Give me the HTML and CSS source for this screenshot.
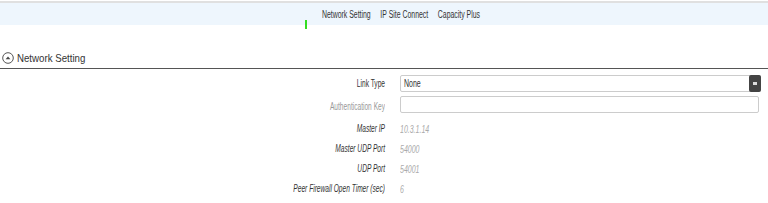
FILE: index.html
```html
<!DOCTYPE html>
<html lang="en">

<head>
    <meta charset="UTF-8">
    <title>Network Setting</title>
    <link rel="stylesheet" href="styles.css">
</head>

<body>
    <div class="topbar">
        <span class="loader"></span>
        <nav class="tabs">
            <a href="#">Network Setting</a>
            <a href="#">IP Site Connect</a>
            <a href="#">Capacity Plus</a>
        </nav>
    </div>

    <div class="section-head">
        <svg class="toggle" width="12" height="12" viewBox="0 0 12 12">
            <circle cx="6" cy="6" r="5.3" fill="none" stroke="#555" stroke-width="1"/>
            <path d="M3.6 7.2 L6 4.6 L8.4 7.2 Z" fill="#444"/>
        </svg>
        <span class="title">Network Setting</span>
    </div>

    <div class="form">
        <label>Link Type</label>
        <div class="select">
            <span class="text">None</span>
            <span class="arrow"></span>
        </div>

        <label class="muted">Authentication Key</label>
        <div class="textbox"></div>

        <label class="ro">Master IP</label>
        <span class="value">10.3.1.14</span>

        <label class="ro">Master UDP Port</label>
        <span class="value">54000</span>

        <label class="ro">UDP Port</label>
        <span class="value">54001</span>

        <label class="ro">Peer Firewall Open Timer (sec)</label>
        <span class="value">6</span>
    </div>
</body>

</html>
```

FILE: styles.css
```css
body {
    margin: 0;
    font-family: "Liberation Sans", Arial, sans-serif;
    font-size: 10px;
    color: #333;
    background: #fff;
}

.topbar {
    position: relative;
    margin-top: 1px;
    border-top: 2px solid #e0e0e0;
    background-color: #eef6fd;
    height: 22px;
    display: flex;
    align-items: center;
}

.loader {
    position: absolute;
    left: 305px;
    top: 17px;
    width: 2px;
    height: 9px;
    background-color: #33dd22;
}

.tabs {
    display: flex;
    gap: 14px;
    margin-left: 322px;
    transform: scaleX(0.69);
    transform-origin: left center;
}

.tabs a {
    color: #333;
    text-decoration: none;
}

.section-head {
    display: flex;
    align-items: center;
    gap: 3px;
    margin-top: 27px;
    padding: 0 2px 4px;
    border-bottom: 1px solid #555;
    font-size: 11px;
    color: #333;
}

.section-head .title {
    display: inline-block;
    transform: scaleX(0.88);
    transform-origin: left center;
}

.form {
    display: grid;
    grid-template-columns: 385px 361px;
    column-gap: 15px;
    align-items: center;
    margin-top: 4px;
}

.form label {
    text-align: right;
    color: #333;
    transform: scaleX(0.66);
    transform-origin: right center;
}

.form label.muted {
    color: #999;
}

.form label.ro {
    font-style: italic;
    height: 20px;
    line-height: 20px;
}

.select,
.textbox {
    height: 15px;
    border: 1px solid #ccc;
    border-radius: 2px;
    margin: 2px 0;
}

.select {
    display: flex;
    align-items: center;
    justify-content: space-between;
    padding-left: 3px;
}

.select .text {
    transform: scaleX(0.7);
    transform-origin: left center;
}

.select .arrow {
    width: 12px;
    height: 17px;
    margin-right: -1px;
    border-radius: 2px;
    background-color: #444;
    position: relative;
}

.select .arrow::after {
    content: "";
    position: absolute;
    left: 4px;
    top: 7px;
    width: 4px;
    height: 3px;
    background-color: #ddd;
}

.textbox {
    width: 357px;
    margin-bottom: 6px;
}

.value {
    font-style: italic;
    color: #aaa;
    transform: scaleX(0.7);
    transform-origin: left center;
}
```
